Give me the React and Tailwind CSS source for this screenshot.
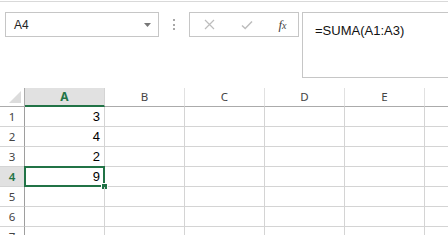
export default function App() {
  const cols = ["A", "B", "C", "D", "E", ""];
  const data = { 1: "3", 2: "4", 3: "2", 4: "9" };
  const rows = [1, 2, 3, 4, 5, 6, 7];
  const hdrFont = { fontFamily: '"Noto Sans", "Open Sans", sans-serif' };
  return (
    <div className="w-[448px] h-[235px] overflow-hidden bg-white relative" style={{ fontFamily: '"Liberation Sans", Arial, sans-serif' }}>
      {/* top area */}
      <div className="h-[88px] flex flex-col">
        <div className="h-px mt-px bg-[#d9d9d9]" />
        <div className="flex items-start mt-[10px]">
          {/* name box */}
          <div className="shrink-0 ml-[5px] w-[154px] h-[25px] border border-[#c6c6c6] flex items-center justify-between pl-[8px] pr-[7px]">
            <span className="text-[12px] text-[#222]">A4</span>
            <svg width="7" height="4" viewBox="0 0 7 4"><path d="M0 0H7L3.5 4Z" fill="#777" /></svg>
          </div>
          {/* dots */}
          <div className="shrink-0 w-[30px] h-[25px] flex flex-col items-center justify-center gap-[2.5px]">
            <div className="w-[2px] h-[2px] bg-[#a8a8a8]" />
            <div className="w-[2px] h-[2px] bg-[#a8a8a8]" />
            <div className="w-[2px] h-[2px] bg-[#a8a8a8]" />
          </div>
          {/* buttons */}
          <div className="shrink-0 w-[110px] h-[25px] border border-[#c6c6c6] flex items-center">
            <div className="w-[37px] flex justify-center ml-[1px]">
              <svg width="11" height="11" viewBox="0 0 11 11"><path d="M1 1L10 10M10 1L1 10" stroke="#bdbdbd" strokeWidth="1.2" /></svg>
            </div>
            <div className="w-[37px] flex justify-center">
              <svg width="12" height="10" viewBox="0 0 12 10"><path d="M1 5.5L4.2 8.5L11 1.5" stroke="#bdbdbd" strokeWidth="1.5" fill="none" /></svg>
            </div>
            <div className="flex-1 flex justify-center pl-[2px]">
              <span className="text-[13px] italic text-[#444] leading-none" style={{ fontFamily: '"Liberation Serif", "Times New Roman", serif' }}>f<span className="text-[10px]">x</span></span>
            </div>
          </div>
          {/* formula box */}
          <div className="shrink-0 ml-[3px] w-[160px] h-[66px] border border-[#c6c6c6] pl-[12px] pt-[5px]">
            <span className="text-[13px] leading-[16px] text-[#111]">=SUMA(A1:A3)</span>
          </div>
        </div>
      </div>
      {/* grid */}
      <div className="grid grid-cols-[25px_80px_80px_80px_80px_80px_80px]">
        {/* header row */}
        <div className="h-[19px] border-b border-r border-[#ababab] relative bg-white">
          <svg className="absolute right-[3px] bottom-[3px]" width="12" height="12" viewBox="0 0 12 12"><path d="M12 0V12H0Z" fill="#dcdcdc" /></svg>
        </div>
        {cols.map((c, i) => (
          <div
            key={c + i}
            style={hdrFont}
            className={
              i === 0
                ? "h-[19px] bg-[#e1e1e1] border-b-2 border-b-[#217346] border-r border-r-[#d4d4d4] flex items-center justify-center text-[12px] font-bold text-[#217346]"
                : "h-[19px] bg-white border-b border-b-[#ababab] border-r border-r-[#e1e1e1] flex items-center justify-center text-[11.5px] text-[#444]"
            }
          >
            {c}
          </div>
        ))}
        {rows.map((r) => (
          <Row key={r} r={r} val={data[r]} hdrFont={hdrFont} />
        ))}
      </div>
    </div>
  );
}

function Row({ r, val, hdrFont }) {
  const sel = r === 4;
  return (
    <>
      <div
        style={hdrFont}
        className={
          sel
            ? "h-[20px] bg-[#e1e1e1] border-b border-b-[#d4d4d4] border-r border-r-[#9e9e9e] flex items-center justify-center text-[11.5px] font-semibold text-[#217346]"
            : "h-[20px] bg-white border-b border-b-[#d4d4d4] border-r border-r-[#9e9e9e] flex items-center justify-center text-[11.5px] text-[#444]"
        }
      >
        {r}
      </div>
      <div className="h-[20px] border-b border-r border-[#d4d4d4] relative flex items-center justify-end pr-[4px] text-[13px] text-black">
        {val}
        {sel && (
          <>
            <div className="absolute left-[-1px] top-[-1px] right-[-1px] bottom-[-1px] border-2 border-[#217346] pointer-events-none" />
            <div className="absolute right-[-4px] bottom-[-4px] w-[7px] h-[7px] bg-[#217346] border border-white" />
          </>
        )}
      </div>
      <div className="h-[20px] border-b border-r border-[#d4d4d4]" />
      <div className="h-[20px] border-b border-r border-[#d4d4d4]" />
      <div className="h-[20px] border-b border-r border-[#d4d4d4]" />
      <div className="h-[20px] border-b border-r border-[#d4d4d4]" />
      <div className="h-[20px] border-b border-r border-[#d4d4d4]" />
    </>
  );
}
